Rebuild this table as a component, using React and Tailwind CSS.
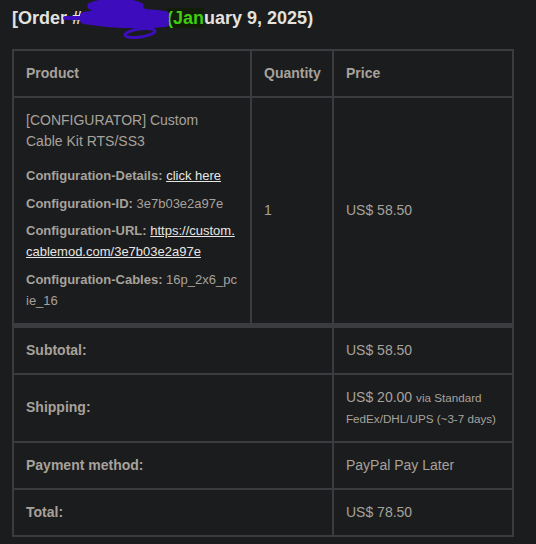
import React from "react";

const cell = "border border-[#3b3c3f] p-3 text-left align-middle";

export default function App() {
  return (
    <div
      className="min-h-[544px] w-full bg-[#1b1c1e] pl-3 pt-[7px] text-[14px] leading-[21px] text-[#a7a29b]"
      style={{ fontFamily: '"Liberation Sans", Arial, sans-serif' }}
    >
      <div className="relative">
        <h2 className="mb-[19px] text-[18px] font-bold leading-[23.4px] text-[#e4e2de]">
          <span>[Order #</span>
          <span className="inline-block w-[85px]" />
          <span className="bg-[#111c09] text-[#3fcc12]">(Jan</span>
          <span>uary 9, 2025)</span>
        </h2>
        <svg
          className="pointer-events-none absolute left-[-12px] top-[-7px]"
          width="200"
          height="45"
          viewBox="0 0 200 45"
        >
          <g fill="none" stroke="#3d0dbd" strokeLinecap="round" strokeLinejoin="round">
            <path d="M91 6 C 102 1, 130 1, 140 6" strokeWidth="7" />
            <path d="M94 9 C 112 6, 132 7, 142 10" strokeWidth="6" />
            <path d="M65 18 L 86 18" strokeWidth="4" />
            <path d="M84 16 C 105 12, 140 11, 165 15" strokeWidth="8" />
            <path d="M84 20 C 108 24, 140 25, 165 23" strokeWidth="8" />
            <path d="M95 18 C 120 19, 145 19, 166 19" strokeWidth="6" />
            <path d="M140 25 C 146 27, 152 27, 156 25" strokeWidth="4" />
            <ellipse cx="140" cy="33" rx="15" ry="4" strokeWidth="3" transform="rotate(-8 140 33)" />
          </g>
        </svg>
      </div>
      <table className="w-[502px] table-fixed border-separate border-spacing-0 border border-[#3b3c3f]">
        <thead>
          <tr>
            <th className={`${cell} w-[238px] font-bold`}>Product</th>
            <th className={`${cell} w-[82px] font-bold`}>Quantity</th>
            <th className={`${cell} w-[180px] font-bold`}>Price</th>
          </tr>
        </thead>
        <tbody>
          <tr>
            <td className={`${cell} [overflow-wrap:anywhere]`}>
              [CONFIGURATOR] Custom Cable Kit RTS/SS3
              <ul className="mt-[13px] list-none p-0 text-[13px] [word-break:break-all]">
                <li className="m-0 p-0">
                  <strong className="font-bold">Configuration-Details:</strong>{" "}
                  <a className="text-[#e8e6e3] underline">click here</a>
                </li>
                <li className="mt-[6.5px] p-0">
                  <strong className="font-bold">Configuration-ID:</strong> 3e7b03e2a97e
                </li>
                <li className="mt-[6.5px] p-0">
                  <strong className="font-bold">Configuration-URL:</strong>{" "}
                  <a className="text-[#e8e6e3] underline">https://custom.cablemod.com/3e7b03e2a97e</a>
                </li>
                <li className="mt-[6.5px] p-0">
                  <strong className="font-bold">Configuration-Cables:</strong> 16p_2x6_pcie_16
                </li>
              </ul>
            </td>
            <td className={cell}>1</td>
            <td className={cell}>US$ 58.50</td>
          </tr>
        </tbody>
        <tfoot>
          <tr>
            <th colSpan={2} className={`${cell} border-t-4 font-bold`}>
              Subtotal:
            </th>
            <td className={`${cell} border-t-4`}>US$ 58.50</td>
          </tr>
          <tr>
            <th colSpan={2} className={`${cell} font-bold`}>
              Shipping:
            </th>
            <td className={cell}>
              US$ 20.00{" "}
              <small className="text-[11.67px]">via Standard FedEx/DHL/UPS (~3-7 days)</small>
            </td>
          </tr>
          <tr>
            <th colSpan={2} className={`${cell} font-bold`}>
              Payment method:
            </th>
            <td className={cell}>PayPal Pay Later</td>
          </tr>
          <tr>
            <th colSpan={2} className={`${cell} font-bold`}>
              Total:
            </th>
            <td className={cell}>US$ 78.50</td>
          </tr>
        </tfoot>
      </table>
    </div>
  );
}
